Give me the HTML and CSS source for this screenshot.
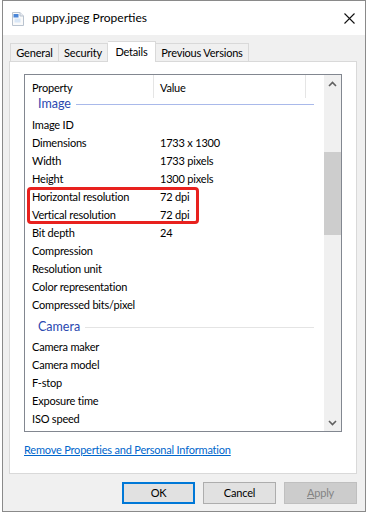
FILE: index.html
```html
<!DOCTYPE html>
<html>
<head>
<meta charset="utf-8">
<link rel="stylesheet" href="styles.css">
</head>
<body>
<div class="window">
  <div class="titlebar">
    <svg class="title-icon" width="12" height="14" viewBox="0 0 12 14">
      <path d="M0.5 0.5 H8 L11.5 4 V13.5 H0.5 Z" fill="#fafafa" stroke="#b9c3cf"/>
      <path d="M8 0.5 V4 H11.5" fill="#e8ecf2" stroke="#b9c3cf"/>
      <rect x="1.5" y="2" width="5" height="3.5" fill="#4a86d8"/>
      <rect x="2.5" y="6.5" width="6" height="4" fill="#d8e6f6"/>
    </svg>
    <span class="title">puppy.jpeg Properties</span>
    <svg class="close" width="11" height="11" viewBox="0 0 11 11">
      <path d="M0.5 0.5 L10.5 10.5 M10.5 0.5 L0.5 10.5" stroke="#111" stroke-width="1.1"/>
    </svg>
  </div>
  <div class="content">
    <div class="tabs">
      <div class="tab tab-general">General</div>
      <div class="tab tab-security">Security</div>
      <div class="tab tab-details selected">Details</div>
      <div class="tab tab-previous">Previous Versions</div>
    </div>
    <div class="panel">
      <div class="list">
        <div class="list-main">
          <div class="header">
            <div class="hcol hc1">Property</div>
            <div class="hcol hc2">Value</div>
          </div>
          <div class="group group-first"><span class="gtext">Image</span><span class="gline blue"></span></div>
          <div class="row"><span class="c1">Image ID</span><span class="c2"></span></div>
          <div class="row"><span class="c1">Dimensions</span><span class="c2">1733 x 1300</span></div>
          <div class="row"><span class="c1">Width</span><span class="c2">1733 pixels</span></div>
          <div class="row"><span class="c1">Height</span><span class="c2">1300 pixels</span></div>
          <div class="row"><span class="c1">Horizontal resolution</span><span class="c2">72 dpi</span></div>
          <div class="row"><span class="c1">Vertical resolution</span><span class="c2">72 dpi</span></div>
          <div class="row"><span class="c1">Bit depth</span><span class="c2">24</span></div>
          <div class="row"><span class="c1">Compression</span><span class="c2"></span></div>
          <div class="row"><span class="c1">Resolution unit</span><span class="c2"></span></div>
          <div class="row"><span class="c1">Color representation</span><span class="c2"></span></div>
          <div class="row"><span class="c1">Compressed bits/pixel</span><span class="c2"></span></div>
          <div class="group group-next"><span class="gtext">Camera</span><span class="gline gray"></span></div>
          <div class="row"><span class="c1">Camera maker</span><span class="c2"></span></div>
          <div class="row"><span class="c1">Camera model</span><span class="c2"></span></div>
          <div class="row"><span class="c1">F-stop</span><span class="c2"></span></div>
          <div class="row"><span class="c1">Exposure time</span><span class="c2"></span></div>
          <div class="row"><span class="c1">ISO speed</span><span class="c2"></span></div>
          <div class="highlight"></div>
        </div>
        <div class="scrollbar">
          <div class="sb-btn">
            <svg width="9" height="6" viewBox="0 0 9 6"><path d="M1 5 L4.5 1.5 L8 5" fill="none" stroke="#606060" stroke-width="1.6"/></svg>
          </div>
          <div class="sb-track">
            <div class="sb-gap-top"></div>
            <div class="sb-thumb"></div>
          </div>
          <div class="sb-btn">
            <svg width="9" height="6" viewBox="0 0 9 6"><path d="M1 1 L4.5 4.5 L8 1" fill="none" stroke="#606060" stroke-width="1.6"/></svg>
          </div>
        </div>
      </div>
      <a class="link" href="#">Remove Properties and Personal Information</a>
    </div>
    <div class="buttons">
      <div class="btn btn-default">OK</div>
      <div class="btn">Cancel</div>
      <div class="btn btn-disabled"><u>A</u>pply</div>
    </div>
  </div>
</div>
</body>
</html>
```

FILE: styles.css
```css
* { box-sizing: border-box; }
html, body { margin: 0; padding: 0; background: #ffffff; }
body {
  font-family: Lato, "Liberation Sans", sans-serif;
  font-size: 11px;
  letter-spacing: -0.2px;
  color: #000;
}
.window {
  margin-left: 2px;
  width: 364px;
  height: 512px;
  border: 1px solid #8a8a8a;
  background: #f0f0f0;
  display: flex;
  flex-direction: column;
}
.titlebar {
  height: 34px;
  background: #fff;
  display: flex;
  align-items: center;
  padding-left: 9px;
  flex: none;
}
.title-icon { flex: none; margin-top: 1px; }
.title {
  margin-left: 8px;
  font-size: 12px;
  letter-spacing: 0;
  flex: 1;
  line-height: 16px;
}
.close { margin-right: 10px; flex: none; }

.content {
  flex: 1;
  display: flex;
  flex-direction: column;
  padding: 6px 8px 7px 6px;
}
.tabs {
  display: flex;
  height: 20px;
  padding-left: 1px;
  position: relative;
  z-index: 1;
}
.tab {
  margin-top: 2px;
  height: 18px;
  border: 1px solid #d9d9d9;
  border-bottom: none;
  border-left: none;
  background: #f0f0f0;
  line-height: 16px;
  text-align: center;
  padding-top: 1px;
  white-space: nowrap;
}
.tab-general { width: 49px; border-left: 1px solid #d9d9d9; }
.tab-security { width: 49px; }
.tab-details { width: 48px; }
.tab-previous { width: 93px; border-left: none; }
.tab.selected {
  margin-top: 0;
  height: 21px;
  background: #fff;
  padding-top: 2px;
}
.panel {
  width: 348px;
  height: 413px;
  border: 1px solid #d9d9d9;
  background: #fff;
  padding: 12px 14px 0 14px;
  display: flex;
  flex-direction: column;
}
.list {
  width: 318px;
  height: 358px;
  border: 1px solid #828790;
  display: flex;
  flex: none;
}
.list-main {
  flex: 1;
  position: relative;
  overflow: hidden;
}
.header {
  display: flex;
  height: 21px;
}
.hcol {
  padding-top: 6px;
  line-height: 14px;
  border-right: 1px solid #e5e5e5;
  height: 23px;
}
.hc1 { width: 129px; padding-left: 7px; }
.hc2 { width: 152px; padding-left: 6px; }
.group {
  display: flex;
  align-items: center;
  padding-left: 13px;
  padding-right: 10px;
}
.group-first { height: 20px; padding-top: 0; padding-bottom: 4px; }
.group-next { height: 24px; padding-top: 6px; padding-bottom: 4px; }
.gtext {
  color: #2a48b0;
  font-size: 12.5px;
  letter-spacing: 0;
  line-height: 14px;
}
.gline {
  flex: 1;
  height: 1px;
  margin-left: 5px;
}
.gline.blue { background: #a9b9ea; }
.gline.gray { background: #e4e4e4; }
.row {
  display: flex;
  height: 18px;
  line-height: 18px;
}
.c1 { width: 129px; padding-left: 7px; white-space: nowrap; }
.c2 { padding-left: 6px; white-space: nowrap; }
.highlight {
  position: absolute;
  left: 2px;
  top: 112px;
  width: 172px;
  height: 37px;
  border: 3px solid #e8211e;
  border-radius: 4px;
}
.scrollbar {
  width: 17px;
  flex: none;
  background: #f0f0f0;
  display: flex;
  flex-direction: column;
}
.sb-btn {
  height: 17px;
  display: flex;
  align-items: center;
  justify-content: center;
  flex: none;
}
.sb-track { flex: 1; display: flex; flex-direction: column; }
.sb-gap-top { height: 60px; flex: none; }
.sb-thumb { height: 83px; background: #cdcdcd; flex: none; }
.link {
  margin-top: 10px;
  color: #0066cc;
  text-decoration: underline;
  line-height: 15px;
  align-self: flex-start;
}
.buttons {
  display: flex;
  justify-content: flex-end;
  gap: 8px;
  margin-top: 8px;
}
.btn {
  width: 73px;
  height: 22px;
  background: #e1e1e1;
  border: 1px solid #adadad;
  text-align: center;
  line-height: 20px;
}
.btn-default { border: 2px solid #0078d7; line-height: 18px; }
.btn-disabled { background: #cccccc; border-color: #bfbfbf; color: #838383; }
.btn-disabled u { text-decoration: underline; }
```
